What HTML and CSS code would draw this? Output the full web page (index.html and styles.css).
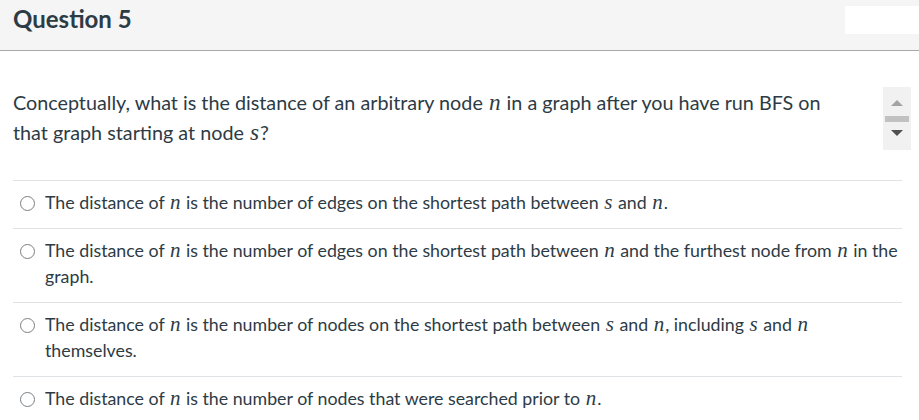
FILE: index.html
```html
<!DOCTYPE html>
<html lang="en">
<head>
<meta charset="utf-8">
<title>Question 5</title>
<link rel="stylesheet" href="styles.css">
</head>
<body>
<div class="question">
  <div class="header">
    <h2 class="question-name">Question 5</h2>
    <div class="points-box"></div>
  </div>
  <div class="body">
    <div class="question-text-row">
      <p class="question-text">Conceptually, what is the distance of an arbitrary node <span class="m">n</span> in a graph after you have run BFS on that graph starting at node <span class="m">s</span>?</p>
      <div class="scroller">
        <span class="tri up"></span>
        <span class="thumb"></span>
        <span class="tri down"></span>
      </div>
    </div>
    <div class="answers">
      <label class="answer"><span class="radio"></span><span class="answer-text">The distance of <span class="m">n</span> is the number of edges on the shortest path between <span class="m">s</span> and <span class="m">n</span>.</span></label>
      <label class="answer"><span class="radio"></span><span class="answer-text">The distance of <span class="m">n</span> is the number of edges on the shortest path between <span class="m">n</span> and the furthest node from <span class="m">n</span> in the graph.</span></label>
      <label class="answer"><span class="radio"></span><span class="answer-text narrow">The distance of <span class="m">n</span> is the number of nodes on the shortest path between <span class="m">s</span> and <span class="m">n</span>, including <span class="m">s</span> and <span class="m">n</span> themselves.</span></label>
      <label class="answer"><span class="radio"></span><span class="answer-text">The distance of <span class="m">n</span> is the number of nodes that were searched prior to <span class="m">n</span>.</span></label>
    </div>
  </div>
</div>
</body>
</html>
```

FILE: styles.css
```css
* { box-sizing: border-box; }
html, body { margin: 0; padding: 0; background: #ffffff; }
body {
  font-family: Lato, "Open Sans", "Liberation Sans", sans-serif;
  color: #2d3b45;
  width: 919px;
  overflow: hidden;
}
.header {
  height: 51px;
  background: #f5f5f5;
  border-bottom: 1px solid #a8a8a8;
  display: flex;
  align-items: flex-start;
  justify-content: space-between;
  padding: 0 0 0 13px;
}
.question-name {
  margin: 0;
  padding-top: 4px;
  font-size: 24px;
  font-weight: 700;
  line-height: 30px;
  color: #2d3b45;
}
.points-box {
  width: 74px;
  height: 28px;
  margin-top: 6px;
  background: #ffffff;
}
.body {
  padding: 0 17px 0 13px;
}
.question-text-row {
  display: flex;
  align-items: flex-start;
  justify-content: space-between;
  padding-top: 37px;
  height: 129px;
}
.question-text {
  margin: 0;
  font-size: 19.75px;
  line-height: 30px;
  width: 840px;
}
.m {
  font-family: "Liberation Serif", "DejaVu Serif", serif;
  font-style: italic;
  font-size: 1.18em;
  line-height: 1;
  padding: 0 1px;
}
.scroller {
  width: 28px;
  height: 63px;
  margin-top: -1px;
  margin-right: -9px;
  background: #f1f1f1;
  display: flex;
  flex-direction: column;
  align-items: center;
  padding-top: 13px;
  flex: none;
}
.tri {
  width: 0;
  height: 0;
  border-left: 6px solid transparent;
  border-right: 6px solid transparent;
}
.tri.up { border-bottom: 6px solid #a3a3a3; }
.tri.down { border-top: 6px solid #505050; margin-top: 8px; }
.thumb {
  width: 24px;
  height: 6px;
  background: #c1c1c1;
  margin-top: 10px;
}
.answers {
  display: flex;
  flex-direction: column;
}
.answer {
  display: flex;
  align-items: flex-start;
  border-top: 1px solid #dfe3e6;
  padding: 8px 0 13px 7px;
  font-size: 17.8px;
  line-height: 26px;
}
.radio {
  flex: none;
  width: 15px;
  height: 15px;
  border: 1px solid #7a7f84;
  border-radius: 50%;
  margin-top: 7px;
  margin-right: 10px;
  background: #fff;
}
.answer-text { flex: 1; }
.answer-text.narrow { max-width: 790px; }
```
